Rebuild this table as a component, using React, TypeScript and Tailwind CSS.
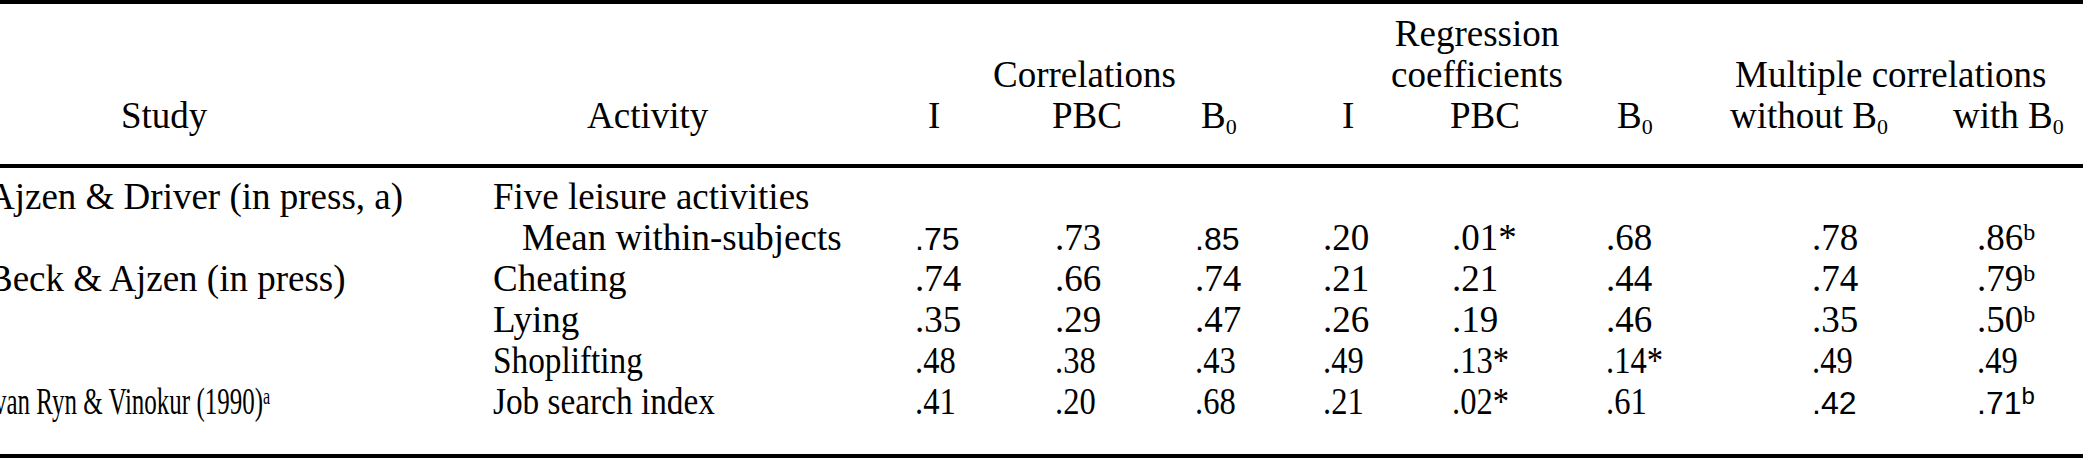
import type { ReactNode } from 'react';

// column widths in px
const cols = 'grid grid-cols-[493px_395px_144px_156px_120px_132px_156px_120px_228px_139px]';

// left padding of data cells per column
const dataPad = [
  '-ml-[12px]',
  'pl-0',
  'pl-[27px]',
  'pl-[23px]',
  'pl-[7px]',
  'pl-[15px]',
  'pl-[12px]',
  'pl-[10px]',
  'pl-[96px]',
  'pl-[33px]',
];

const headPad = [
  'pl-[121px]',
  'pl-[94px]',
  'pl-[40px]',
  'pl-[20px]',
  'pl-[13px]',
  'pl-[34px]',
  'pl-[10px]',
  'pl-[21px]',
  'pl-[14px]',
  'pl-[9px]',
];

function Sub({ children }: { children: ReactNode }) {
  return <span className="text-[22px] leading-none align-[-6px]">{children}</span>;
}

function Sup({ children }: { children: ReactNode }) {
  return <span className="text-[24px] leading-none align-[10px]">{children}</span>;
}

const B0 = () => (
  <>
    B<Sub>0</Sub>
  </>
);

type Val = { t: string; sans?: boolean; sup?: string };

interface Row {
  study?: ReactNode;
  studySquash?: boolean;
  activity: string;
  indent?: boolean;
  squash?: boolean;
  vals?: Val[];
}

const v = (t: string, sans = false, sup?: string): Val => ({ t, sans, sup });

const rows: Row[] = [
  { study: 'Ajzen & Driver (in press, a)', activity: 'Five leisure activities' },
  {
    activity: 'Mean within-subjects',
    indent: true,
    vals: [v('.75', true), v('.73'), v('.85', true), v('.20'), v('.01*'), v('.68'), v('.78'), v('.86', false, 'b')],
  },
  {
    study: 'Beck & Ajzen (in press)',
    activity: 'Cheating',
    vals: [v('.74'), v('.66'), v('.74'), v('.21'), v('.21'), v('.44'), v('.74'), v('.79', false, 'b')],
  },
  {
    activity: 'Lying',
    vals: [v('.35'), v('.29'), v('.47'), v('.26'), v('.19'), v('.46'), v('.35'), v('.50', false, 'b')],
  },
  {
    activity: 'Shoplifting',
    squash: true,
    vals: [v('.48'), v('.38'), v('.43'), v('.49'), v('.13*'), v('.14*'), v('.49'), v('.49')],
  },
  {
    study: (
      <>
        van Ryn &amp; Vinokur (1990)<Sup>a</Sup>
      </>
    ),
    studySquash: true,
    activity: 'Job search index',
    squash: true,
    vals: [v('.41'), v('.20'), v('.68'), v('.21'), v('.02*'), v('.61'), v('.42', true), v('.71', true, 'b')],
  },
];

function Cell({ val, squash }: { val: Val; squash?: boolean }) {
  if (val.sans) {
    return (
      <span className="font-['Liberation_Sans',Arial,sans-serif] text-[32px]">
        {val.t}
        {val.sup && <Sup>{val.sup}</Sup>}
      </span>
    );
  }
  return (
    <span className={squash ? 'inline-block origin-left scale-x-[0.88]' : ''}>
      {val.t}
      {val.sup && <Sup>{val.sup}</Sup>}
    </span>
  );
}

export default function App() {
  return (
    <div className="w-[2088px] h-[460px] overflow-hidden bg-white">
      <div className="w-[2083px] text-black font-['Liberation_Serif','Times_New_Roman',serif] text-[37px] leading-[41px] whitespace-nowrap">
        {/* header */}
        <div className="border-t-4 border-b-4 border-black pt-[9px] pb-[28px]">
          <div className={`${cols} grid-rows-[41px_41px_41px]`}>
            <div className="col-start-6 col-span-3 row-start-1 row-span-2">
              <div className="ml-[79px] w-[180px] text-center">
                Regression
                <br />
                coefficients
              </div>
            </div>
            <div className="col-start-3 col-span-3 row-start-2 pl-[105px]">Correlations</div>
            <div className="col-start-9 col-span-2 row-start-2 pl-[19px]">Multiple correlations</div>

            <div className={`row-start-3 col-start-1 ${headPad[0]}`}>Study</div>
            <div className={`row-start-3 col-start-2 ${headPad[1]}`}>Activity</div>
            <div className={`row-start-3 col-start-3 ${headPad[2]}`}>I</div>
            <div className={`row-start-3 col-start-4 ${headPad[3]}`}>PBC</div>
            <div className={`row-start-3 col-start-5 ${headPad[4]}`}>
              <B0 />
            </div>
            <div className={`row-start-3 col-start-6 ${headPad[5]}`}>I</div>
            <div className={`row-start-3 col-start-7 ${headPad[6]}`}>PBC</div>
            <div className={`row-start-3 col-start-8 ${headPad[7]}`}>
              <B0 />
            </div>
            <div className={`row-start-3 col-start-9 ${headPad[8]}`}>
              without <B0 />
            </div>
            <div className={`row-start-3 col-start-10 ${headPad[9]}`}>
              with <B0 />
            </div>
          </div>
        </div>

        {/* body */}
        <div className="border-b-4 border-black pt-[8px] pb-[32px]">
          {rows.map((r, i) => (
            <div key={i} className={`${cols} h-[41px]`}>
              <div className={dataPad[0]}>
                {r.study && (
                  <span className={r.studySquash ? 'inline-block origin-left scale-x-[0.675] ml-[6px]' : ''}>
                    {r.study}
                  </span>
                )}
              </div>
              <div className={r.indent ? 'pl-[29px]' : 'pl-0'}>
                <span className={r.squash ? 'inline-block origin-left scale-x-[0.9]' : ''}>{r.activity}</span>
              </div>
              {r.vals
                ? r.vals.map((val, j) => (
                    <div key={j} className={dataPad[j + 2]}>
                      <Cell val={val} squash={r.squash} />
                    </div>
                  ))
                : null}
            </div>
          ))}
        </div>
      </div>
    </div>
  );
}
